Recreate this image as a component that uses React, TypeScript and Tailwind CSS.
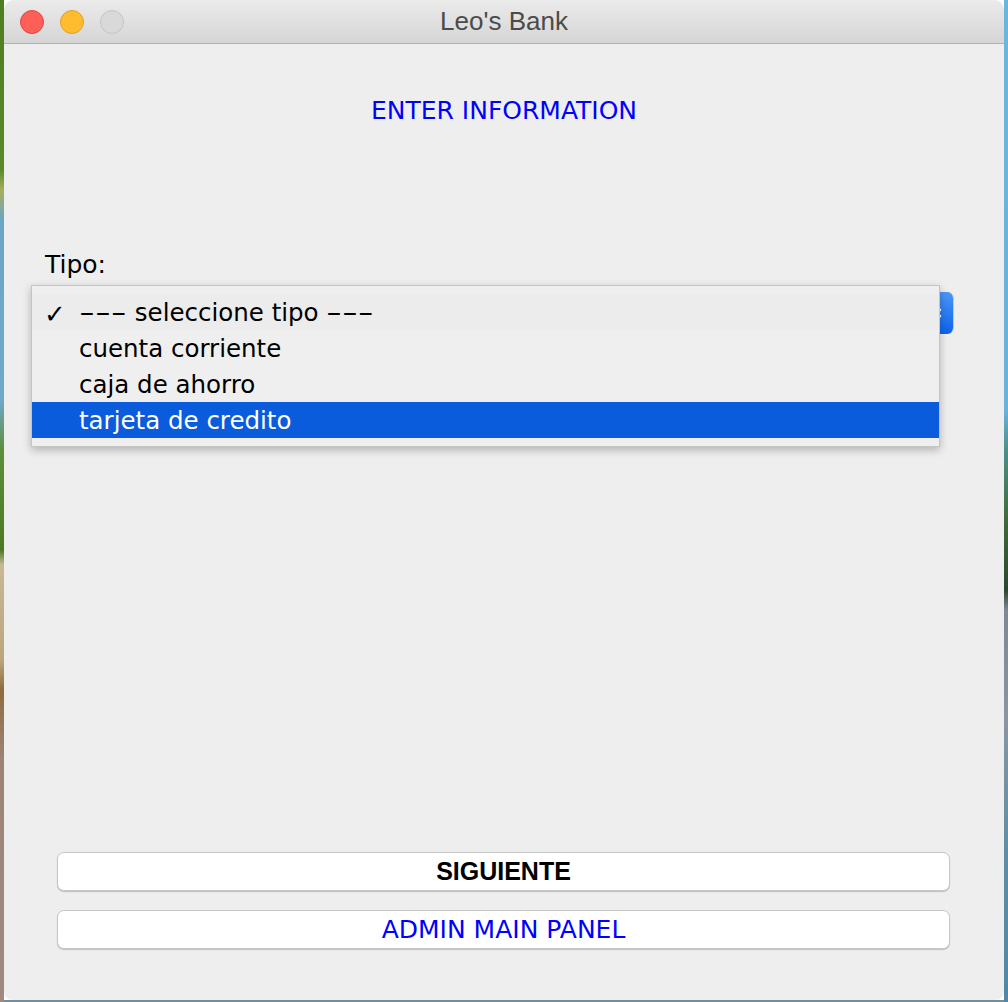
const options = ['--- seleccione tipo ---', 'cuenta corriente', 'caja de ahorro', 'tarjeta de credito']

function TrafficLights() {
  return (
    <div className="flex items-center gap-[16px] pl-[16px]">
      <span className="h-[24px] w-[24px] rounded-full border border-[#e0443e] bg-[#fe5f57]" />
      <span className="h-[24px] w-[24px] rounded-full border border-[#dea123] bg-[#febc2e]" />
      <span className="h-[24px] w-[24px] rounded-full border border-[#c4c4c4] bg-[#d9d9d9]" />
    </div>
  )
}

function OptionLabel({ text }: { text: string }) {
  // the placeholder entry draws its dashes wide, like the mac font does
  const parts = text.split(/(---)/)
  return (
    <span className="pt-[3px] text-[24.5px] leading-none">
      {parts.map((p, i) =>
        p === '---' ? (
          <span key={i} className="inline-block w-[48px]">
            <span className="inline-block origin-left scale-x-[1.8]">{p}</span>
          </span>
        ) : (
          <span key={i} className="whitespace-pre">{p}</span>
        ),
      )}
    </span>
  )
}

function ComboPopup() {
  return (
    <div className="absolute left-[27px] top-[285px] w-[909px] border border-[#c4c4c4] bg-[#efefef] py-[8px] shadow-[0_3px_8px_rgba(0,0,0,0.25)]">
      {options.map((opt, i) => {
        const selected = i === 3
        return (
          <div
            key={opt}
            className={
              'flex h-[36px] items-center ' +
              (selected ? 'bg-[#0a5cdc] text-white' : i === 0 ? 'bg-[#ececec] text-black' : 'text-black')
            }
          >
            <span className="w-[47px] pl-[12px] pt-[3px] text-[26px] font-bold leading-none">{i === 0 ? '✓' : ''}</span>
            <OptionLabel text={opt} />
          </div>
        )
      })}
    </div>
  )
}

export default function App() {
  return (
    <div className="flex h-[1002px] w-[1008px] font-['DejaVu_Sans',sans-serif]">
      <div className="w-[4px] bg-[linear-gradient(180deg,#4f7d22_0px,#5a8a26_170px,#a6ae5c_190px,#6aa6c6_220px,#6fa9c9_400px,#5d8f3a_450px,#4d7a22_550px,#c8b896_565px,#bba57e_660px,#8f6b3f_690px,#9c8478_760px,#a08a80_1002px)]" />
      <div className="flex flex-col">
        <div className="relative flex h-[1000px] w-[1000px] flex-col overflow-hidden rounded-t-[10px] rounded-b-[8px] bg-[#eeeeee]">
          {/* title bar */}
          <div className="relative flex h-[44px] shrink-0 items-center border-b border-[#b1b1b1] bg-[linear-gradient(180deg,#ebebeb,#d5d5d5)]">
            <TrafficLights />
            <div className="absolute inset-0 flex items-center justify-center font-['Liberation_Sans',sans-serif] text-[26px] text-[#4b4b4b]">
              Leo's Bank
            </div>
          </div>

          {/* body */}
          <div className="flex flex-1 flex-col pb-[51px]">
            <div className="mt-[52px] text-center text-[25px] leading-[30px] text-[#0000ff]">ENTER INFORMATION</div>

            <div className="mt-[124px] pl-[41px] text-[25px] leading-[30px] text-black">Tipo:</div>

            <div className="ml-[36px] mr-[50px] mt-[12px] flex h-[42px] items-center justify-end rounded-[6px] border border-[#c8c8c8] bg-white">
              <div className="flex h-[42px] w-[34px] items-center justify-center rounded-[6px] bg-[linear-gradient(180deg,#4a97f7,#0b63eb)]">
                <svg width="14" height="24" viewBox="0 0 14 24" fill="none" stroke="white" strokeWidth="2.5" strokeLinecap="round" strokeLinejoin="round">
                  <path d="M3 9 L7 5 L11 9" />
                  <path d="M3 15 L7 19 L11 15" />
                </svg>
              </div>
            </div>

            <div className="mt-auto flex flex-col gap-[19px] pl-[53px] pr-[54px]">
              <button className="h-[39px] rounded-[7px] border border-[#c6c6c6] bg-white font-['Liberation_Sans',sans-serif] text-[25px] font-bold text-black shadow-[0_1px_1px_rgba(0,0,0,0.2)]">
                SIGUIENTE
              </button>
              <button className="h-[39px] rounded-[7px] border border-[#c6c6c6] bg-white text-[25px] text-[#0000ff] shadow-[0_1px_1px_rgba(0,0,0,0.2)]">
                ADMIN MAIN PANEL
              </button>
            </div>
          </div>

          <ComboPopup />
        </div>
        <div className="h-[2px] bg-[#6f8fa0]" />
      </div>
      <div className="w-[4px] bg-[linear-gradient(180deg,#6ab6de_0px,#6ab4dc_410px,#4f8e8a_450px,#3f6a3a_520px,#2e4530_590px,#7c8a96_610px,#8a96a2_720px,#5f8ea6_850px,#4f88a4_1002px)]" />
    </div>
  )
}
